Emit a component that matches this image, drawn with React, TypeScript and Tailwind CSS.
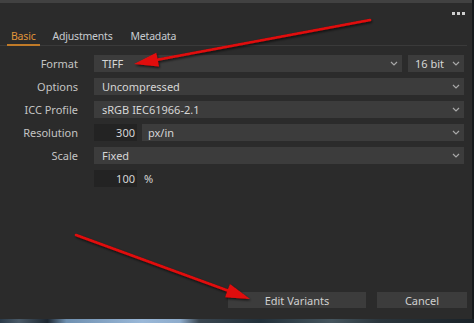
import React from "react";

function Chevron() {
  return (
    <svg width="8" height="5" viewBox="0 0 8 5" className="shrink-0">
      <path d="M1 1 L4 4 L7 1" fill="none" stroke="#a8a8a8" strokeWidth="1.2" />
    </svg>
  );
}

function Select({ text, className = "", pl = "pl-[8px]" }: { text: string; className?: string; pl?: string }) {
  return (
    <div className={`h-[17px] bg-[#3c3c3c] flex items-center justify-between pr-[4px] ${pl} ${className}`}>
      <span className="text-[#d6d6d6] text-[11px] leading-none">{text}</span>
      <Chevron />
    </div>
  );
}

function NumField({ value }: { value: string }) {
  return (
    <div className="h-[17px] w-[43px] bg-[#232323] flex items-center justify-end pr-[2px]">
      <span className="text-[#d6d6d6] text-[11px] leading-none">{value}</span>
    </div>
  );
}

function Row({ label, children }: { label: string; children: React.ReactNode }) {
  return (
    <div className="flex items-center h-[17px]">
      <div className="w-[78px] text-right text-[#c4c4c4] text-[11px] leading-none shrink-0">{label}</div>
      <div className="flex-1 flex items-center ml-[16px]">{children}</div>
    </div>
  );
}

export default function App() {
  return (
    <div
      className="relative w-[474px] h-[323px] bg-[#16191c] overflow-hidden"
      style={{ fontFamily: '"Noto Sans", "Open Sans", sans-serif' }}
    >
      <div className="w-[472px] h-[319px] bg-[#2b2b2b] border-t-[3px] border-[#414141] flex flex-col">
        {/* top bar */}
        <div className="h-[26px] flex justify-end pt-[9px] pr-[7px]">
          <div className="flex gap-[2px] h-[3px]">
            <div className="w-[3px] h-[3px] bg-[#cfcfcf]" />
            <div className="w-[3px] h-[3px] bg-[#cfcfcf]" />
            <div className="w-[3px] h-[3px] bg-[#cfcfcf]" />
          </div>
        </div>
        {/* tabs */}
        <div className="h-[17px] flex items-stretch border-b border-[#3a3a3a] mr-[5px] text-[10.5px] tracking-[-0.2px] leading-none">
          <div className="ml-[7px] px-[4px] pb-[1px] flex items-center border-b-2 border-[#c07a28] text-[#e0953a] -mb-[1px]">
            Basic
          </div>
          <div className="ml-[13px] pb-[1px] flex items-center text-[#c8ccd0]">Adjustments</div>
          <div className="ml-[18px] pb-[1px] flex items-center text-[#c8ccd0]">Metadata</div>
        </div>
        {/* form */}
        <div className="mt-[9px] flex flex-col gap-[6px] pr-[8px]">
          <Row label="Format">
            <Select text="TIFF" className="flex-1" />
            <Select text="16 bit" className="w-[56px] ml-[6px]" pl="pl-[7px]" />
          </Row>
          <Row label="Options">
            <Select text="Uncompressed" className="flex-1" />
          </Row>
          <Row label="ICC Profile">
            <Select text="sRGB IEC61966-2.1" className="flex-1" />
          </Row>
          <Row label="Resolution">
            <NumField value="300" />
            <Select text="px/in" className="flex-1 ml-[5px]" pl="pl-[6px]" />
          </Row>
          <Row label="Scale">
            <Select text="Fixed" className="flex-1" />
          </Row>
          <Row label="">
            <NumField value="100" />
            <span className="ml-[7px] text-[#d6d6d6] text-[11px] leading-none">%</span>
          </Row>
        </div>
        {/* buttons */}
        <div className="mt-auto mb-[11px] flex justify-end pr-[5px] gap-[11px]">
          <div className="w-[138px] h-[16px] bg-[#3c3c3c] flex items-center justify-center text-[#cfcfcf] text-[11px] leading-none">
            Edit Variants
          </div>
          <div className="w-[90px] h-[16px] bg-[#3c3c3c] flex items-center justify-center text-[#cfcfcf] text-[11px] leading-none">
            Cancel
          </div>
        </div>
      </div>
      {/* photo strip at bottom */}
      <div
        className="h-[4px] w-[474px]"
        style={{
          background:
            "linear-gradient(90deg,#2a3a48 0%,#4a5a68 4%,#1c2630 10%,#6f90b0 14%,#9ab8d8 30%,#8eaccc 38%,#3a4650 42%,#22303a 55%,#45555e 70%,#2a353c 80%,#1a2228 100%)",
        }}
      />
      {/* red arrows overlay */}
      <svg className="absolute left-0 top-0 pointer-events-none" width="474" height="323" viewBox="0 0 474 323">
        <defs>
          <filter id="sh" x="-10%" y="-10%" width="120%" height="130%">
            <feDropShadow dx="1" dy="1.5" stdDeviation="1.2" floodColor="#000" floodOpacity="0.7" />
          </filter>
        </defs>
        <g filter="url(#sh)" fill="#e00a0a" stroke="#e00a0a">
          <line x1="370" y1="20" x2="156" y2="60" strokeWidth="2.6" strokeLinecap="round" />
          <polygon points="134,64 159,66.5 156.3,52.7" stroke="none" />
          <line x1="76" y1="235" x2="229" y2="291" strokeWidth="2.6" strokeLinecap="round" />
          <polygon points="250,299 225.1,297.3 229.9,284.1" stroke="none" />
        </g>
      </svg>
    </div>
  );
}
